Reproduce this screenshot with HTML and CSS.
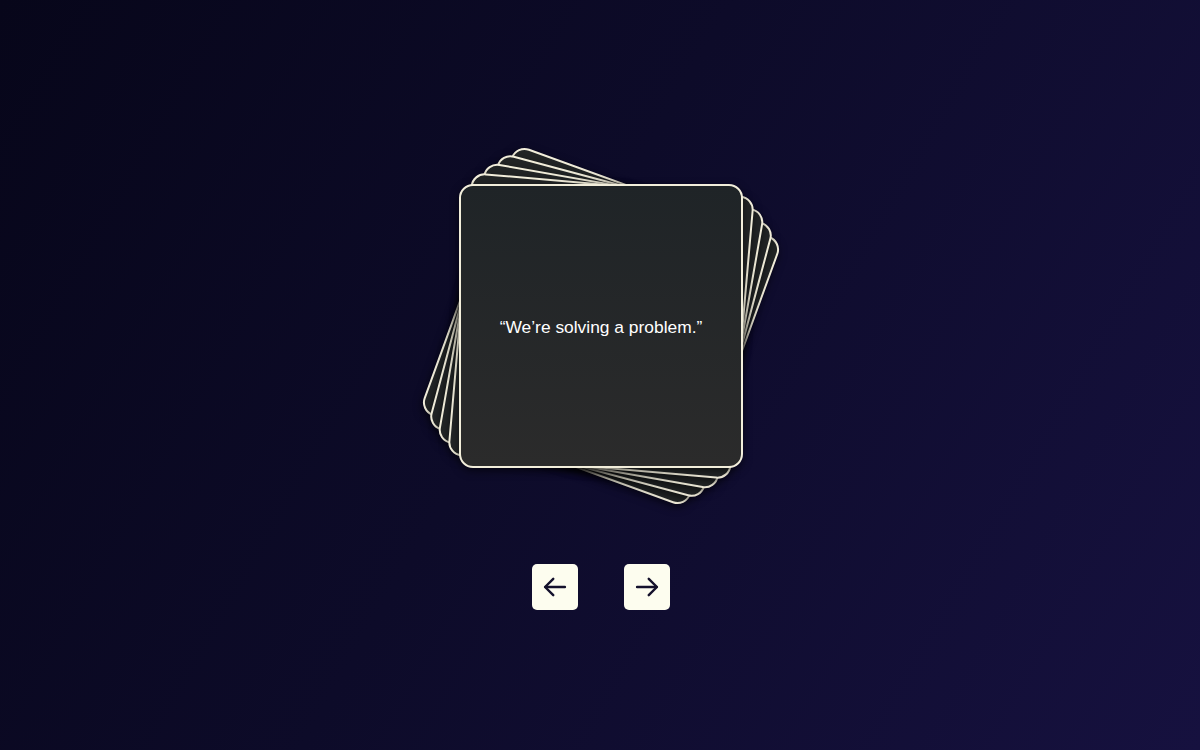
FILE: index.html
```html
<!DOCTYPE html>
<html lang="en">
<head>
<meta charset="utf-8">
<title>Cards</title>
<link rel="stylesheet" href="styles.css">
</head>
<body>
<main class="page">
  <div class="deck">
    <div class="card card-back r20"></div>
    <div class="card card-back r15"></div>
    <div class="card card-back r10"></div>
    <div class="card card-back r5"></div>
    <div class="card card-front">
      <p class="quote">“We’re solving a problem.”</p>
    </div>
  </div>
  <div class="controls">
    <button class="nav-btn" aria-label="Previous">
      <svg width="28" height="28" viewBox="0 0 24 24" fill="none" stroke="currentColor" stroke-width="2.1" stroke-linecap="round" stroke-linejoin="round"><path d="M20.5 12H3.8"/><path d="M10.5 5l-7 7 7 7"/></svg>
    </button>
    <button class="nav-btn" aria-label="Next">
      <svg width="28" height="28" viewBox="0 0 24 24" fill="none" stroke="currentColor" stroke-width="2.1" stroke-linecap="round" stroke-linejoin="round"><path d="M3.5 12h16.7"/><path d="M13.5 5l7 7-7 7"/></svg>
    </button>
  </div>
</main>
</body>
</html>
```
FILE: styles.css
```css
html, body {
  margin: 0;
  padding: 0;
  height: 100%;
}
body {
  background: linear-gradient(120deg, #07061a 0%, #0d0b29 45%, #16113f 100%);
  font-family: "Liberation Sans", Arial, sans-serif;
  overflow: hidden;
}
.page {
  display: flex;
  flex-direction: column;
  align-items: center;
  padding-top: 184px;
  padding-left: 2px;
  box-sizing: border-box;
  height: 750px;
}
.deck {
  display: grid;
  width: 284px;
  height: 284px;
}
.card {
  grid-area: 1 / 1;
  box-sizing: border-box;
  width: 284px;
  height: 284px;
  border: 2px solid #f2eedb;
  border-radius: 14px;
  background: linear-gradient(180deg, #1f2427 0%, #2b2b2b 100%);
  box-shadow: 0 3px 8px rgba(0, 0, 0, 0.55);
}
.card-back { background: #222526; }
.r5 { transform: rotate(5deg); }
.r10 { transform: rotate(10deg); }
.r15 { transform: rotate(15deg); }
.r20 { transform: rotate(20deg); }
.card-front {
  transform: rotate(0deg);
  display: flex;
  align-items: center;
  justify-content: center;
  padding-top: 3px;
}
.quote {
  margin: 0;
  color: #ffffff;
  font-size: 17.4px;
}
.controls {
  display: flex;
  gap: 46px;
  margin-top: 96px;
}
.nav-btn {
  width: 46px;
  height: 46px;
  padding: 0;
  border: none;
  border-radius: 5px;
  background: #fdfdef;
  color: #14112c;
  display: flex;
  align-items: center;
  justify-content: center;
}
```
